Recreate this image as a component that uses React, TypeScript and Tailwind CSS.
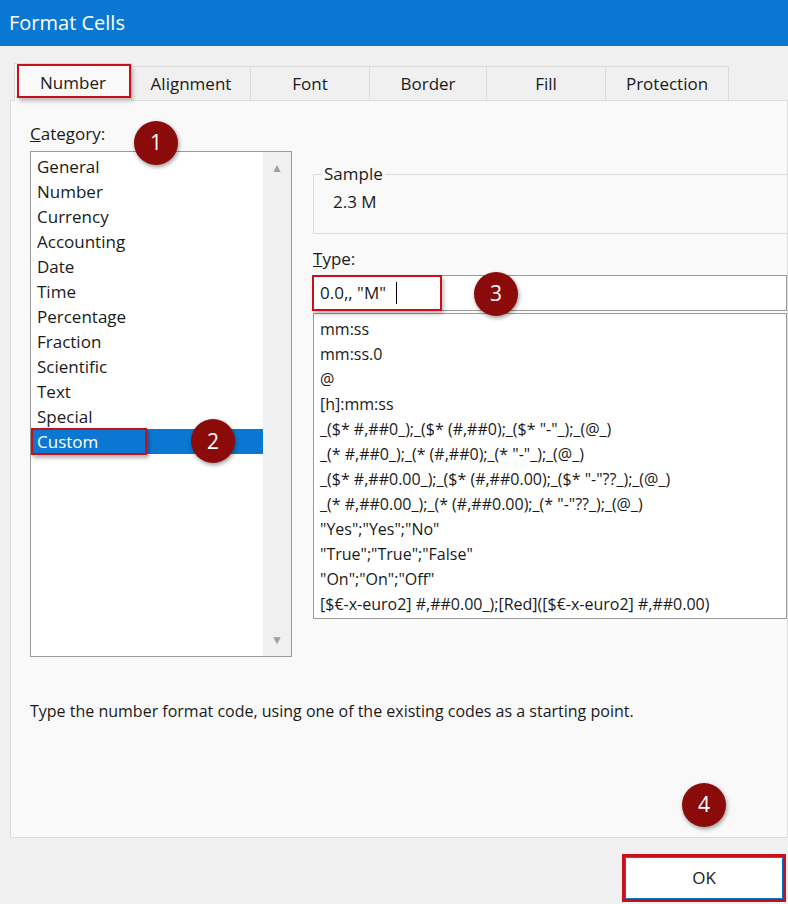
import React from "react";

const Badge = ({ n, cls }: { n: string; cls: string }) => (
  <div className={"absolute w-[44px] h-[44px] rounded-full bg-[#8b0a0a] text-white flex items-center justify-center text-[21px] shadow-[1px_2px_4px_rgba(0,0,0,0.4)] " + cls}>{n}</div>
);

const cats = ["General","Number","Currency","Accounting","Date","Time","Percentage","Fraction","Scientific","Text","Special"];
const types = ["mm:ss","mm:ss.0","@","[h]:mm:ss",'_($* #,##0_);_($* (#,##0);_($* "-"_);_(@_)','_(* #,##0_);_(* (#,##0);_(* "-"_);_(@_)','_($* #,##0.00_);_($* (#,##0.00);_($* "-"??_);_(@_)','_(* #,##0.00_);_(* (#,##0.00);_(* "-"??_);_(@_)','"Yes";"Yes";"No"','"True";"True";"False"','"On";"On";"Off"','[$€-x-euro2] #,##0.00_);[Red]([$€-x-euro2] #,##0.00)'];

export default function App() {
  return (
    <div className="w-[788px] h-[904px] bg-[#f0f0f0] overflow-hidden text-[#1a1a1a] flex flex-col" style={{ fontFamily: '"Open Sans","Noto Sans",sans-serif' }}>
      <div className="h-[46px] bg-[#0a78d2] text-white text-[20px] pl-[9px] flex items-center">Format Cells</div>
      <div className="flex h-[34px] mt-[20px] pl-[14px] text-[17px] items-end">
        <div className="relative w-[118px] h-[38px] bg-[#f9f9f9] border border-[#dcdcdc] border-b-0 flex items-center justify-center z-10 -mb-px">
          <div className="absolute left-[2px] top-[0px] w-[114px] h-[34px] border-[2px] border-[#c8101a] shadow-[2px_3px_4px_rgba(0,0,0,0.25)]" />
          Number
        </div>
        {[["Alignment",120],["Font",120],["Border",118],["Fill",120],["Protection",124]].map(([t,w]) => (
          <div key={t as string} style={{ width: w as number }} className="h-[34px] border border-[#dcdcdc] border-b-0 -ml-px bg-[#f0f0f0] flex items-center justify-center">{t}</div>
        ))}
      </div>
      <div className="relative ml-[10px] h-[738px] bg-[#f9f9f9] border border-[#dcdcdc] text-[17px] flex flex-col pl-[19px] pt-[20px]">
        <div className="flex gap-[21px]">
          <div className="flex flex-col w-[262px] shrink-0">
            <div className="relative h-[30px]">
              <span className="underline">C</span>ategory:
              <Badge n="1" cls="left-[104px] top-[0px]" />
            </div>
            <div className="h-[506px] bg-white border border-[#9a9a9a] flex">
              <div className="flex-1 pt-[2px] leading-[25px]">
                {cats.map(c => <div key={c} className="pl-[6px]">{c}</div>)}
                <div className="relative pl-[6px] bg-[#0a78d2] text-white">
                  Custom
                  <div className="absolute left-[0px] top-[-1px] w-[116px] h-[27px] border-[2px] border-[#c8101a] shadow-[2px_3px_4px_rgba(0,0,0,0.3)]" />
                  <Badge n="2" cls="left-[160px] -top-[10px]" />
                </div>
              </div>
              <div className="w-[28px] bg-[#f0f0f0] flex flex-col justify-between items-center py-[7px] text-[#a0a0a0] text-[12px]">
                <span>▲</span><span>▼</span>
              </div>
            </div>
          </div>
          <div className="flex flex-col flex-1 pt-[53px]">
            <div className="relative h-[60px] border border-[#dcdcdc] mr-[-2px] pl-[19px] pt-[14px]">
              <div className="absolute left-[8px] -top-[14px] bg-[#f9f9f9] px-[2px]">Sample</div>
              2.3 M
            </div>
            <div className="mt-[12px] h-[29px]"><span className="underline">T</span>ype:</div>
            <div className="relative h-[36px] bg-white border border-[#9a9a9a] flex items-center pl-[6px]">
              0.0,, "M"<span className="ml-[10px] w-px h-[22px] bg-black" />
              <div className="absolute left-[-2px] top-[-1px] w-[130px] h-[36px] border-[2px] border-[#c8101a] shadow-[2px_3px_4px_rgba(0,0,0,0.25)]" />
              <Badge n="3" cls="left-[160px] -top-[4px]" />
            </div>
            <div className="mt-[2px] h-[306px] bg-white border border-[#9a9a9a] pt-[3px] leading-[25px] text-[16px] whitespace-nowrap overflow-hidden">
              {types.map(t => <div key={t} className="pl-[6px]">{t}</div>)}
            </div>
          </div>
        </div>
        <div className="mt-[42px] text-[16px]">Type the number format code, using one of the existing codes as a starting point.</div>
        <div className="relative flex justify-end pr-[61px] mt-[60px]">
          <div className="relative w-[44px] h-[44px]"><Badge n="4" cls="left-0 top-0" /></div>
        </div>
      </div>
      <div className="flex justify-end mt-[16px] pr-[2px]">
        <div className="w-[164px] h-[48px] bg-white border-[3px] border-[#c8101a] shadow-[inset_0_0_0_1px_#0a78d2] flex items-center justify-center text-[17px]">OK</div>
      </div>
    </div>
  );
}
